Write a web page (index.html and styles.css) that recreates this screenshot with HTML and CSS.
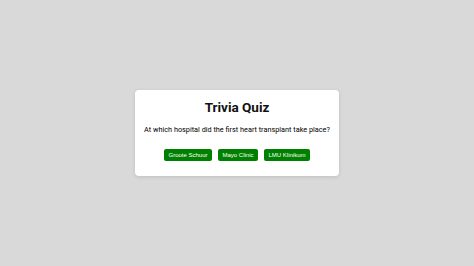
FILE: index.html
```html
<!DOCTYPE html>
<html>
<head>
<meta charset="utf-8">
<title>Trivia Quiz</title>
<link rel="stylesheet" href="styles.css">
</head>
<body>
<div class="card">
  <h1 class="title">Trivia Quiz</h1>
  <p class="question">At which hospital did the first heart transplant take place?</p>
  <div class="answers">
    <button class="answer">Groote Schuur</button>
    <button class="answer">Mayo Clinic</button>
    <button class="answer">LMU Klinikum</button>
  </div>
</div>
</body>
</html>
```
FILE: styles.css
```css
html, body {
  margin: 0;
  height: 100%;
}
body {
  background: #d9d9d9;
  display: flex;
  align-items: center;
  justify-content: center;
  font-family: Roboto, "Liberation Sans", sans-serif;
  color: #111;
}
.card {
  width: 204px;
  height: 86px;
  box-sizing: border-box;
  background: #fff;
  border-radius: 4px;
  box-shadow: 0 1px 4px rgba(0, 0, 0, 0.12);
  padding: 9px 4px 0;
  text-align: center;
}
.title {
  margin: 0;
  font-size: 13.5px;
  line-height: 16px;
  font-weight: 700;
}
.question {
  margin: 10px 0 0;
  font-size: 7.3px;
  line-height: 9px;
  white-space: nowrap;
  color: #000;
}
.answers {
  margin-top: 15px;
  display: flex;
  justify-content: center;
  gap: 6px;
}
.answer {
  font-family: "Liberation Sans", Arial, sans-serif;
  font-size: 6px;
  line-height: 8px;
  height: 12px;
  padding: 2px 4.5px;
  background: #008000;
  color: #fff;
  border: none;
  border-radius: 2px;
}
```
